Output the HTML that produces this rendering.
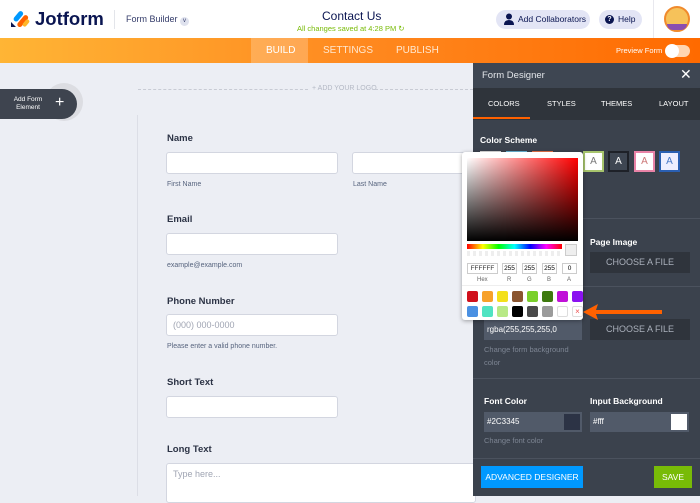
<!DOCTYPE html>
<html><head><style>
*{box-sizing:border-box;margin:0;padding:0}
body{width:700px;height:496px;overflow:hidden;font-family:"Liberation Sans",sans-serif;background:#eceef4;position:relative}
.a{position:absolute}
.lbl{font-size:9.5px;color:#2c3345;font-weight:bold}
.in{background:#fff;border:1px solid #d3d6e0;border-radius:3px;height:22px}
.sub{font-size:7px;color:#57647e}
.dt{font-size:8.5px;color:#fff;font-weight:bold}
.btn{background:#2f343c;color:#aab0bb;font-size:9px;text-align:center;line-height:21px}
.hr{height:1px;background:#4b525e;left:473px;width:227px}
.sw{width:11px;height:11px;border-radius:2px;top:0}
</style></head><body>
<div class="a" style="left:0;top:0;width:700px;height:38px;background:#fff"></div>
<svg class="a" style="left:10px;top:10px" width="20" height="18" viewBox="0 0 20 18"><rect x="6" y="0" width="5" height="12" rx="2.5" transform="rotate(40 8 6)" fill="#0099ff"/><rect x="11" y="4" width="5" height="14" rx="2.5" transform="rotate(40 13 10)" fill="#ff6100"/><rect x="14" y="9" width="4" height="8" rx="2" transform="rotate(40 16 13)" fill="#ffb629"/><path d="M1 12 L1 17 L6 17Z" fill="#0a1551"/></svg>
<div class="a" style="left:35px;top:8px;font-size:18.5px;font-weight:bold;color:#0a1551">Jotform</div>
<div class="a" style="left:114px;top:10px;width:1px;height:19px;background:#e3e5ea"></div>
<div class="a" style="left:126px;top:14px;font-size:9px;color:#343c6a">Form Builder <span style="display:inline-block;width:9px;height:9px;border-radius:50%;background:#dfe2ee;font-size:6px;text-align:center;line-height:9px">v</span></div>
<div class="a" style="left:322px;top:9px;font-size:12px;color:#0a1551">Contact Us</div>
<div class="a" style="left:297px;top:24px;font-size:7.5px;color:#78bb07">All changes saved at 4:28 PM ↻</div>
<div class="a" style="left:496px;top:10px;width:94px;height:19px;border-radius:10px;background:#e3e5f5;font-size:8.5px;color:#0a1551;line-height:19px;padding-left:22px">Add Collaborators</div>
<svg class="a" style="left:504px;top:13px" width="10" height="12"><circle cx="5" cy="3.5" r="3" fill="#0a1551"/><path d="M0 12 Q0 7 5 7 Q10 7 10 12Z" fill="#0a1551"/></svg>
<div class="a" style="left:599px;top:10px;width:43px;height:19px;border-radius:10px;background:#e3e5f5;font-size:8.5px;color:#0a1551;line-height:19px;padding-left:19px">Help</div>
<div class="a" style="left:605px;top:15px;width:9px;height:9px;border-radius:50%;background:#0a1551;color:#fff;font-size:7px;text-align:center;line-height:9px;font-weight:bold">?</div>
<div class="a" style="left:653px;top:0;width:1px;height:38px;background:#e8e8ee"></div>
<div class="a" style="left:664px;top:6px;width:26px;height:26px;border-radius:50%;background:#f6c25a;border:2px solid #f08a2c"></div>
<div class="a" style="left:667px;top:24px;width:20px;height:6px;border-radius:0 0 10px 10px;background:#8a4fb0"></div>
<div class="a" style="left:0;top:38px;width:700px;height:25px;background:linear-gradient(90deg,#ffb535,#ff8a20 50%,#ff6a00)"></div>
<div class="a" style="left:251px;top:38px;width:57px;height:25px;background:rgba(255,255,255,.22)"></div>
<div class="a" style="left:266px;top:45px;font-size:10px;color:#fff">BUILD</div>
<div class="a" style="left:323px;top:45px;font-size:10px;color:#ffe8d0">SETTINGS</div>
<div class="a" style="left:396px;top:45px;font-size:10px;color:#ffe8d0">PUBLISH</div>
<div class="a" style="left:616px;top:46px;font-size:7.5px;color:#fff">Preview Form</div>
<div class="a" style="left:666px;top:45px;width:24px;height:12px;border-radius:6px;background:#ffd5b0"></div>
<div class="a" style="left:665px;top:44px;width:14px;height:14px;border-radius:50%;background:#fff"></div>
<div class="a" style="left:45px;top:83px;width:38px;height:38px;border-radius:50%;background:#dcdde2"></div>
<div class="a" style="left:0;top:89px;width:77px;height:30px;border-radius:0 15px 15px 0;background:#3e444f"></div>
<div class="a" style="left:8px;top:96px;font-size:6.5px;color:#fff;text-align:center;line-height:8px;width:40px">Add Form<br>Element</div>
<div class="a" style="left:55px;top:94px;font-size:16px;color:#fff">+</div>
<div class="a" style="left:137px;top:115px;width:1px;height:381px;background:#dcdee6"></div>
<div class="a" style="left:138px;top:89px;width:170px;border-top:1px dashed #c8cbd4"></div>
<div class="a" style="left:312px;top:85px;font-size:7px;color:#b3b8c4">+ ADD YOUR LOGO</div>
<div class="a" style="left:375px;top:89px;width:98px;border-top:1px dashed #c8cbd4"></div>
<div class="a lbl" style="left:167px;top:133px">Name</div>
<div class="a in" style="left:166px;top:152px;width:172px"></div>
<div class="a in" style="left:352px;top:152px;width:120px"></div>
<div class="a sub" style="left:167px;top:181px">First Name</div>
<div class="a sub" style="left:353px;top:181px">Last Name</div>
<div class="a lbl" style="left:167px;top:214px">Email</div>
<div class="a in" style="left:166px;top:233px;width:172px"></div>
<div class="a sub" style="left:167px;top:262px">example@example.com</div>
<div class="a lbl" style="left:167px;top:296px">Phone Number</div>
<div class="a in" style="left:166px;top:314px;width:172px;font-size:9px;color:#a0a5b3;padding:5px 6px">(000) 000-0000</div>
<div class="a sub" style="left:167px;top:343px">Please enter a valid phone number.</div>
<div class="a lbl" style="left:167px;top:377px">Short Text</div>
<div class="a in" style="left:166px;top:396px;width:172px"></div>
<div class="a lbl" style="left:167px;top:444px">Long Text</div>
<div class="a in" style="left:166px;top:463px;width:310px;height:40px;font-size:9px;color:#a0a5b3;padding:5px 6px">Type here...</div>
<div class="a" style="left:473px;top:63px;width:227px;height:433px;background:#3b424d"></div>
<div class="a" style="left:473px;top:63px;width:227px;height:25px;background:#3e4652"></div>
<div class="a" style="left:482px;top:70px;font-size:9.5px;color:#e3e6ea">Form Designer</div>
<div class="a" style="left:680px;top:66px;font-size:14px;color:#fff">✕</div>
<div class="a" style="left:473px;top:88px;width:227px;height:32px;background:#2f343b"></div>
<div class="a" style="left:473px;top:117px;width:57px;height:2px;background:#ff6100"></div>
<div class="a" style="left:488px;top:99px;font-size:7.5px;color:#fff">COLORS</div>
<div class="a" style="left:547px;top:99px;font-size:7.5px;color:#fff">STYLES</div>
<div class="a" style="left:601px;top:99px;font-size:7.5px;color:#fff">THEMES</div>
<div class="a" style="left:659px;top:99px;font-size:7.5px;color:#fff">LAYOUT</div>
<div class="a dt" style="left:480px;top:135px">Color Scheme</div>
<div class="a" style="left:480px;top:151px;width:21px;height:21px;background:#fff;border:2px solid #ddd"></div>
<div class="a" style="left:506px;top:151px;width:21px;height:21px;background:#6bb6d6"></div>
<div class="a" style="left:532px;top:151px;width:21px;height:21px;background:#e8744a"></div>
<div class="a" style="left:583px;top:151px;width:21px;height:21px;background:#fff;border:2px solid #a7c46d;color:#777;font-size:10px;text-align:center;line-height:17px">A</div>
<div class="a" style="left:608px;top:151px;width:21px;height:21px;background:#3e4652;border:2px solid #1e2128;color:#fff;font-size:10px;text-align:center;line-height:17px">A</div>
<div class="a" style="left:634px;top:151px;width:21px;height:21px;background:#fff;border:2px solid #e983a7;color:#c77;font-size:10px;text-align:center;line-height:17px">A</div>
<div class="a" style="left:659px;top:151px;width:21px;height:21px;background:#eef;border:2px solid #2a5fb2;color:#4678c8;font-size:10px;text-align:center;line-height:17px">A</div>
<div class="a hr" style="top:218px"></div>
<div class="a dt" style="left:590px;top:237px">Page Image</div>
<div class="a btn" style="left:590px;top:252px;width:100px">CHOOSE A FILE</div>
<div class="a hr" style="top:286px"></div>
<div class="a" style="left:484px;top:320px;width:98px;height:20px;background:#515a69;font-size:8px;color:#fff;padding:5px 3px;overflow:hidden;white-space:nowrap">rgba(255,255,255,0</div>
<div class="a btn" style="left:590px;top:319px;width:100px">CHOOSE A FILE</div>
<div class="a" style="left:484px;top:343px;font-size:7.5px;color:#7d8593;line-height:13px">Change form background<br>color</div>
<div class="a hr" style="top:378px"></div>
<div class="a dt" style="left:484px;top:396px">Font Color</div>
<div class="a dt" style="left:590px;top:396px">Input Background</div>
<div class="a" style="left:484px;top:412px;width:98px;height:20px;background:#515a69;font-size:8px;color:#fff;padding:5px 3px">#2C3345</div>
<div class="a" style="left:564px;top:414px;width:16px;height:16px;background:#2c3345"></div>
<div class="a" style="left:590px;top:412px;width:99px;height:20px;background:#515a69;font-size:8px;color:#fff;padding:5px 3px">#fff</div>
<div class="a" style="left:671px;top:414px;width:16px;height:16px;background:#fff"></div>
<div class="a" style="left:484px;top:436px;font-size:7.5px;color:#7d8593">Change font color</div>
<div class="a hr" style="top:458px"></div>
<div class="a" style="left:481px;top:466px;width:102px;height:22px;background:#09f;color:#fff;font-size:8.5px;text-align:center;line-height:22px">ADVANCED DESIGNER</div>
<div class="a" style="left:654px;top:466px;width:38px;height:22px;background:#78bb07;color:#fff;font-size:8.5px;text-align:center;line-height:22px">SAVE</div>
<div class="a" style="left:462px;top:152px;width:121px;height:168px;background:#fff;border-radius:3px;box-shadow:0 1px 4px rgba(0,0,0,.35)"></div>
<div class="a" style="left:467px;top:158px;width:111px;height:83px;background:linear-gradient(to bottom,transparent,#000),linear-gradient(to right,#fff,#f00)"></div>
<div class="a" style="left:467px;top:244px;width:95px;height:5px;background:linear-gradient(to right,#f00,#ff0,#0f0,#0ff,#00f,#f0f,#f00)"></div>
<div class="a" style="left:565px;top:244px;width:12px;height:12px;background:#eee;border:1px solid #ccc"></div>
<div class="a" style="left:467px;top:251px;width:95px;height:5px;background:repeating-linear-gradient(90deg,#eee 0 3px,#fff 3px 6px)"></div>
<div class="a" style="left:467px;top:263px;width:31px;height:11px;border:1px solid #ccc;font-size:6.5px;text-align:center;line-height:9px;color:#333">FFFFFF</div>
<div class="a" style="left:502px;top:263px;width:15px;height:11px;border:1px solid #ccc;font-size:6.5px;text-align:center;line-height:9px">255</div>
<div class="a" style="left:522px;top:263px;width:15px;height:11px;border:1px solid #ccc;font-size:6.5px;text-align:center;line-height:9px">255</div>
<div class="a" style="left:542px;top:263px;width:15px;height:11px;border:1px solid #ccc;font-size:6.5px;text-align:center;line-height:9px">255</div>
<div class="a" style="left:562px;top:263px;width:15px;height:11px;border:1px solid #ccc;font-size:6.5px;text-align:center;line-height:9px">0</div>
<div class="a" style="left:477px;top:277px;font-size:6px;color:#666">Hex</div>
<div class="a" style="left:507px;top:277px;font-size:6px;color:#666">R</div>
<div class="a" style="left:527px;top:277px;font-size:6px;color:#666">G</div>
<div class="a" style="left:547px;top:277px;font-size:6px;color:#666">B</div>
<div class="a" style="left:567px;top:277px;font-size:6px;color:#666">A</div>
<div class="a" style="left:462px;top:285px;width:121px;height:1px;background:#eee"></div>
<div class="a" style="left:467px;top:291px;width:112px;height:11px">
<div class="a sw" style="left:0;background:#d0101c"></div><div class="a sw" style="left:15px;background:#f7a12a"></div><div class="a sw" style="left:30px;background:#f3e01a"></div><div class="a sw" style="left:45px;background:#8a5530"></div><div class="a sw" style="left:60px;background:#7ad02a"></div><div class="a sw" style="left:75px;background:#3e7a0e"></div><div class="a sw" style="left:90px;background:#c010d8"></div><div class="a sw" style="left:105px;background:#8a12f0"></div></div>
<div class="a" style="left:467px;top:306px;width:112px;height:11px">
<div class="a sw" style="left:0;background:#4a90e2"></div><div class="a sw" style="left:15px;background:#50e3c2"></div><div class="a sw" style="left:30px;background:#b8e986"></div><div class="a sw" style="left:45px;background:#000"></div><div class="a sw" style="left:60px;background:#4a4a4a"></div><div class="a sw" style="left:75px;background:#9b9b9b"></div><div class="a sw" style="left:90px;background:#fff;border:1px solid #ddd"></div><div class="a sw" style="left:105px;background:#fff;border:1px solid #ddd;color:#e55;font-size:8px;line-height:9px;text-align:center">×</div></div>
<svg class="a" style="left:580px;top:302px" width="85" height="20"><path d="M3 10 L18 2 L16 8 L82 8 L82 12 L16 12 L18 18 Z" fill="#ff6100"/></svg>
</body></html>
